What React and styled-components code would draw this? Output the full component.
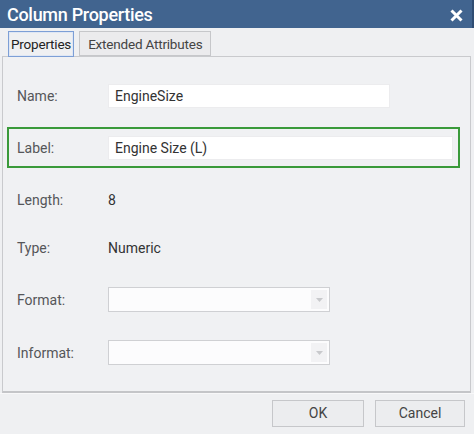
import React from 'react';
import styled, { createGlobalStyle } from 'styled-components';

const GlobalStyle = createGlobalStyle`
  html, body {
    margin: 0;
    padding: 0;
    background: #eff0f2;
  }
  body {
    font-family: Roboto, "Open Sans", sans-serif;
  }
`;

const Dialog = styled.div`
  width: 474px;
  height: 434px;
  box-sizing: border-box;
  background: #eff0f2;
  display: flex;
  flex-direction: column;
`;

const TitleBar = styled.div`
  height: 28px;
  flex: none;
  background: #41648f;
  border-right: 2px solid #2f4d73;
  display: flex;
  align-items: center;
  justify-content: space-between;
  padding: 0 9px 0 7px;
  color: #ffffff;
`;

const Title = styled.div`
  font-size: 18px;
  font-weight: 500;
  letter-spacing: -0.3px;
`;

const CloseButton = styled.div`
  width: 14px;
  height: 14px;
  display: flex;
  align-items: center;
  justify-content: center;
  margin-top: 2px;
`;

const Tabs = styled.div`
  display: flex;
  gap: 5px;
  padding: 3px 0 0 8px;
  height: 26px;
  flex: none;
  position: relative;
  z-index: 1;
`;

const Tab = styled.div`
  box-sizing: border-box;
  height: ${p => (p.$active ? '26px' : '25px')};
  padding: 0 ${p => (p.$active ? '2px' : '8px')};
  display: flex;
  align-items: center;
  font-size: 13.5px;
  letter-spacing: -0.2px;
  color: ${p => (p.$active ? '#222' : '#444')};
  background: ${p => (p.$active ? '#eff0f2' : '#ebebed')};
  border: 1px solid ${p => (p.$active ? '#7d9fd6' : '#c6c7ca')};
  box-shadow: ${p => (p.$active ? 'inset 0 0 0 1px #dfe7f4' : 'none')};
`;

const Panel = styled.div`
  flex: 1;
  margin: -1px 3px 0 2px;
  border: 1px solid #c9cacd;
  border-bottom: 2px solid #c4c5c8;
  background: #f0f1f3;
  padding: 27px 0 0 4px;
  display: flex;
  flex-direction: column;
`;

const Row = styled.div`
  display: flex;
  align-items: center;
  height: ${p => p.$h || 24}px;
  margin-bottom: ${p => p.$gap || 0}px;
  padding-left: 10px;
`;

const HighlightRow = styled(Row)`
  height: 41px;
  box-sizing: border-box;
  border: 2px solid #3a9a3a;
  padding-left: 8px;
  width: 453px;
  margin-bottom: 20px;
`;

const Label = styled.div`
  width: 91px;
  flex: none;
  font-size: 14px;
  color: #555659;
`;

const Value = styled.div`
  font-size: 14px;
  color: #333;
`;

const TextInput = styled.div`
  box-sizing: border-box;
  width: ${p => p.$w}px;
  height: 24px;
  background: #ffffff;
  border: 1px solid #ececee;
  padding: 0 6px;
  display: flex;
  align-items: center;
  font-size: 14px;
  color: #333;
`;

const Combo = styled.div`
  box-sizing: border-box;
  width: 222px;
  height: 25px;
  background: #fcfcfd;
  border: 1px solid #cfd0d3;
  display: flex;
  justify-content: flex-end;
`;

const ComboArrow = styled.div`
  width: 16px;
  margin: 2px;
  background: #f2f2f4;
  display: flex;
  align-items: center;
  justify-content: center;
`;

const Footer = styled.div`
  height: 38px;
  flex: none;
  display: flex;
  justify-content: flex-end;
  align-items: center;
  gap: 11px;
  padding: 0 9px 2px 0;
  border-top: 1px solid #f8f8f9;
`;

const Button = styled.div`
  box-sizing: border-box;
  width: ${p => p.$w}px;
  height: 27px;
  border: 1px solid #c6c7ca;
  background: #ecedef;
  display: flex;
  align-items: center;
  justify-content: center;
  font-size: 14px;
  color: #444;
`;

const Arrow = () => (
  <svg width="7" height="4" viewBox="0 0 7 4">
    <path d="M0 0 L7 0 L3.5 4 Z" fill="#c8c9cc" />
  </svg>
);

export default function App() {
  return (
    <>
      <GlobalStyle />
      <Dialog>
        <TitleBar>
          <Title>Column Properties</Title>
          <CloseButton>
            <svg width="13" height="13" viewBox="0 0 13 13">
              <path d="M1.5 1.5 L11.5 11.5 M11.5 1.5 L1.5 11.5" stroke="#fff" strokeWidth="3" />
            </svg>
          </CloseButton>
        </TitleBar>
        <Tabs>
          <Tab $active>Properties</Tab>
          <Tab>Extended Attributes</Tab>
        </Tabs>
        <Panel>
          <Row $gap={19}>
            <Label>Name:</Label>
            <TextInput $w={282}>EngineSize</TextInput>
          </Row>
          <HighlightRow>
            <Label>Label:</Label>
            <TextInput $w={345}>Engine Size (L)</TextInput>
          </HighlightRow>
          <Row $gap={24}>
            <Label>Length:</Label>
            <Value>8</Value>
          </Row>
          <Row $gap={27}>
            <Label>Type:</Label>
            <Value>Numeric</Value>
          </Row>
          <Row $h={25} $gap={28}>
            <Label>Format:</Label>
            <Combo>
              <ComboArrow><Arrow /></ComboArrow>
            </Combo>
          </Row>
          <Row $h={25}>
            <Label>Informat:</Label>
            <Combo>
              <ComboArrow><Arrow /></ComboArrow>
            </Combo>
          </Row>
        </Panel>
        <Footer>
          <Button $w={92}>OK</Button>
          <Button $w={90}>Cancel</Button>
        </Footer>
      </Dialog>
    </>
  );
}
